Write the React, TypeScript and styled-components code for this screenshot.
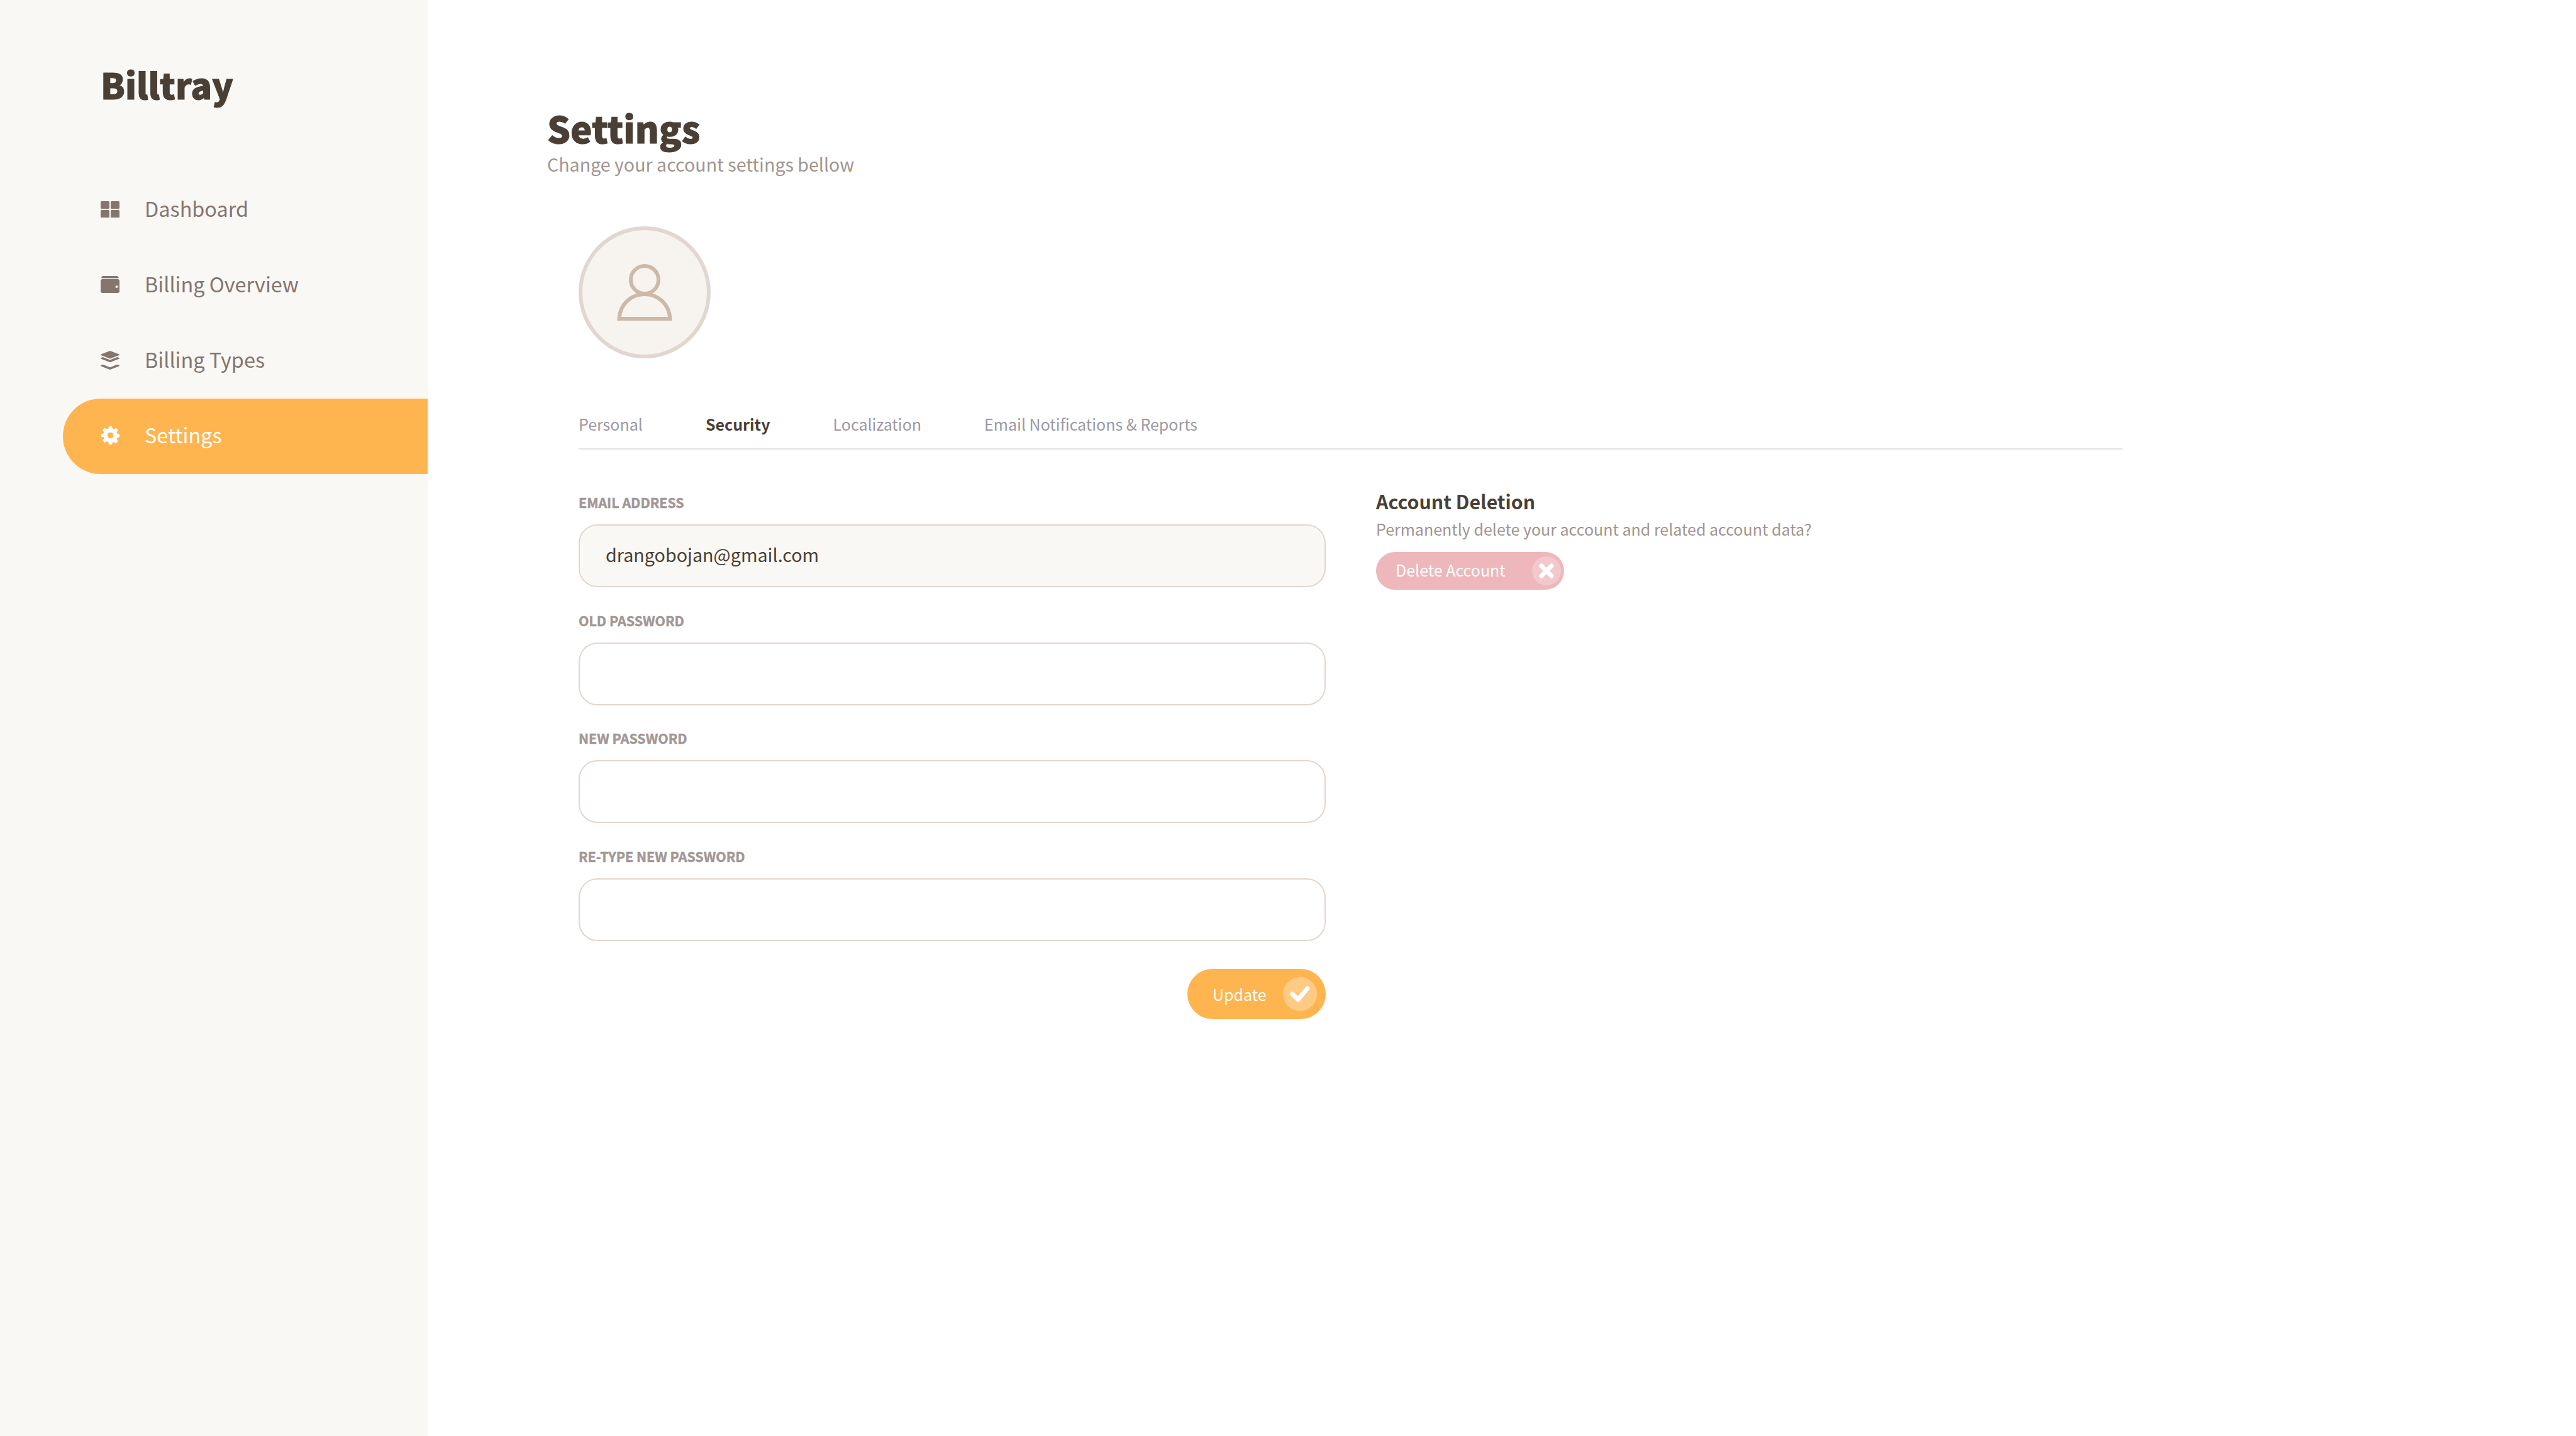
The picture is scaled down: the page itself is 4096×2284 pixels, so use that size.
import React from 'react';
import styled, {createGlobalStyle} from 'styled-components';

const GlobalStyle = createGlobalStyle`
    html, body {
      margin: 0;
      padding: 0;
      background: #FFFFFF;
    }

    * {
      box-sizing: border-box;
    }
`

const Page = styled.div`
    display: flex;
    width: 4096px;
    height: 2284px;
    font-family: "Noto Sans CJK SC", "Noto Sans", sans-serif;
    overflow: hidden;
`

const Sidebar = styled.aside`
    width: 680px;
    flex-shrink: 0;
    background: #F9F8F5;
    padding: 98px 0 0 100px;
`

const Logo = styled.div`
    padding-left: 60px;
    font-weight: 900;
    font-size: 56px;
    line-height: 72px;
    color: #4A3F35;
    -webkit-text-stroke: 1px #4A3F35;
`

const Nav = styled.nav`
    display: flex;
    flex-direction: column;
    margin-top: 104px;
`

const NavItem = styled.div<{$active?: boolean}>`
    display: flex;
    align-items: center;
    height: 120px;
    padding: 0 0 8px 60px;
    border-radius: 60px 0 0 60px;
    font-size: 32.4px;
    color: ${props => props.$active ? '#FFFFFF' : '#84756E'};
    background: ${props => props.$active ? '#FFB54F' : 'transparent'};
`

const NavIcon = styled.span`
    display: flex;
    align-items: center;
    justify-content: center;
    width: 30px;
    height: 36px;
    margin: 5px 40px 0 0;
`

const Main = styled.main`
    flex: 1;
    padding: 163px 0 0 190px;
`

const Title = styled.h1`
    margin: 0;
    font-weight: 900;
    font-size: 58px;
    line-height: 80px;
    color: #4A3F35;
    -webkit-text-stroke: 1px #4A3F35;
`

const Subtitle = styled.div`
    font-size: 28.6px;
    line-height: 40px;
    margin-top: -2px;
    color: #A2948F;
`

const Content = styled.div`
    width: 2455px;
    margin-left: 50px;
`

const Avatar = styled.div`
    display: flex;
    align-items: center;
    justify-content: center;
    width: 210px;
    height: 210px;
    margin-top: 79px;
    border: 6px solid #E2D6CF;
    border-radius: 50%;
    background: #F7F3EE;
`

const Tabs = styled.div`
    display: flex;
    gap: 100px;
    margin-top: 86px;
    padding-bottom: 21px;
    border-bottom: 2px solid #E2E2E2;
`

const Tab = styled.span<{$active?: boolean}>`
    font-size: 25px;
    line-height: 36px;
    font-weight: ${props => props.$active ? 700 : 400};
    color: ${props => props.$active ? '#4A3F35' : '#9C99A2'};
`

const Columns = styled.div`
    display: flex;
    gap: 80px;
    margin-top: 69px;
`

const Form = styled.div`
    display: flex;
    flex-direction: column;
    width: 1188px;
`

const Field = styled.div`
    display: flex;
    flex-direction: column;
    margin-bottom: 37.5px;
`

const FieldLabel = styled.label`
    font-weight: 700;
    font-size: 21.4px;
    line-height: 30px;
    margin-bottom: 20px;
    color: #A39795;
    -webkit-text-stroke: 0.5px #A39795;
`

const Input = styled.div<{$filled?: boolean}>`
    display: flex;
    align-items: center;
    height: 100px;
    padding: 0 41px 5px;
    border: 2px solid #E2D6CF;
    border-radius: 30px;
    font-size: 28.7px;
    color: #4A3F35;
    background: ${props => props.$filled ? '#F9F8F5' : '#FFFFFF'};
`

const Actions = styled.div`
    display: flex;
    justify-content: flex-end;
    margin-top: 7px;
`

const PillButton = styled.button<{$danger?: boolean}>`
    display: flex;
    align-items: center;
    justify-content: space-between;
    width: ${props => props.$danger ? '299px' : '220px'};
    height: ${props => props.$danger ? '60px' : '80px'};
    padding: ${props => props.$danger ? '0 5px 0 31px' : '0 14px 0 40px'};
    border: 0;
    border-radius: 40px;
    font-family: inherit;
    font-size: 25px;
    color: #FFFFFF;
    background: ${props => props.$danger ? '#EDB7BB' : '#FFB54F'};
`

const ButtonText = styled.span<{$danger?: boolean}>`
    margin-bottom: ${props => props.$danger ? '4px' : '0'};
`

const ButtonIcon = styled.span<{$danger?: boolean}>`
    display: flex;
    align-items: center;
    justify-content: center;
    width: ${props => props.$danger ? '46px' : '54px'};
    height: ${props => props.$danger ? '46px' : '54px'};
    border-radius: 50%;
    background: rgba(255, 255, 255, ${props => props.$danger ? 0.25 : 0.3});
`

const Aside = styled.div`
    display: flex;
    flex-direction: column;
`

const AsideTitle = styled.h2`
    margin: 0;
    font-weight: 700;
    font-size: 30.3px;
    line-height: 26px;
    color: #4A3F35;
`

const AsideText = styled.p`
    margin: 13px 0 19px;
    font-size: 25px;
    line-height: 36px;
    color: #A2948F;
`

const AsideAction = styled.div`
    display: flex;
`

const DashboardIcon = () => (
    <svg width="30" height="26" viewBox="0 0 30 26" fill="currentColor">
        <rect x="0" y="0" width="14" height="12" rx="1.5"/>
        <rect x="16" y="0" width="14" height="12" rx="1.5"/>
        <rect x="0" y="14" width="14" height="12" rx="1.5"/>
        <rect x="16" y="14" width="14" height="12" rx="1.5"/>
    </svg>
);

const WalletIcon = () => (
    <svg width="30" height="27" viewBox="0 0 30 27" fill="currentColor">
        <path fillRule="evenodd" d="M3 5h24a3 3 0 0 1 3 3v16a3 3 0 0 1-3 3H3a3 3 0 0 1-3-3V8a3 3 0 0 1 3-3zm22.500 10a2 2 0 1 0 0 4 2 2 0 0 0 0-4z"/>
        <path d="M3 3.500C1.500 3.500.8 2.800 1.200 2 1.700.8 2.500 0 4 0h22c1.500 0 2.300.9 2.700 2.400.1.600-.4 1.100-1.700 1.100z"/>
    </svg>
);

const LayersIcon = () => (
    <svg width="30" height="30" viewBox="0 0 30 30" fill="currentColor">
        <path d="M15 0l14.300 5.500c.9.400.9 1.200 0 1.600L15 12.600.7 7.100c-.9-.4-.9-1.200 0-1.600z"/>
        <path d="M3.600 10.100L15 14.500l11.400-4.400 2.900 1.100c.9.400.9 1.200 0 1.600L15 18.300.7 12.800c-.9-.4-.9-1.200 0-1.600z"/>
        <path d="M3.600 15.800L15 20.200l11.400-4.400 2.900 1.100c.9.400.9 1.200 0 1.600L15 24 .7 18.500c-.9-.4-.9-1.200 0-1.600z" transform="translate(0 6)"/>
    </svg>
);

const GearIcon = () => (
    <svg width="29" height="29" viewBox="0 0 24 24" fill="currentColor">
        <path fillRule="evenodd" d="M10 0h4l.7 3.200 1.900.8L19.400 2.200l2.800 2.800-1.800 2.800.8 1.900L24 10.400v3.900l-2.800.7-.8 1.900 1.800 2.800-2.800 2.800-2.800-1.800-1.900.8L14 24h-4l-.7-3.500-1.900-.8-2.800 1.800-2.800-2.800 1.800-2.800-.8-1.900L0 14.300v-3.900l2.800-.7.800-1.900L1.800 5l2.800-2.800L7.400 4l1.900-.8zM12 8a4 4 0 1 0 0 8 4 4 0 0 0 0-8z"/>
    </svg>
);

const PersonIcon = () => (
    <svg width="88" height="90" viewBox="0 0 88 90" fill="none" stroke="#CDB9A7" strokeWidth="6">
        <ellipse cx="44" cy="25" rx="22" ry="22"/>
        <path d="M3.500 87C5 63 23 48 44 48s39 15 40.500 39z"/>
    </svg>
);

const CheckIcon = () => (
    <svg width="32" height="26" viewBox="0 0 32 26" fill="none" stroke="#FFFFFF" strokeWidth="7" strokeLinecap="round" strokeLinejoin="round">
        <path d="M4 13l9 9L28 4"/>
    </svg>
);

const CrossIcon = () => (
    <svg width="24" height="24" viewBox="0 0 24 24" fill="none" stroke="#FFFFFF" strokeWidth="7" strokeLinecap="round">
        <path d="M4 4l16 16M20 4L4 20"/>
    </svg>
);

const navItems = [
    {label: 'Dashboard', icon: <DashboardIcon/>},
    {label: 'Billing Overview', icon: <WalletIcon/>},
    {label: 'Billing Types', icon: <LayersIcon/>},
    {label: 'Settings', icon: <GearIcon/>, active: true},
];

const tabs = ['Personal', 'Security', 'Localization', 'Email Notifications & Reports'];

const fields = [
    {label: 'EMAIL ADDRESS', value: 'drangobojan@gmail.com'},
    {label: 'OLD PASSWORD'},
    {label: 'NEW PASSWORD'},
    {label: 'RE-TYPE NEW PASSWORD'},
];

const App = () => {
    return (
        <Page>
            <GlobalStyle/>
            <Sidebar>
                <Logo>Billtray</Logo>
                <Nav>
                    {navItems.map(item => (
                        <NavItem key={item.label} $active={item.active}>
                            <NavIcon>{item.icon}</NavIcon>
                            {item.label}
                        </NavItem>
                    ))}
                </Nav>
            </Sidebar>
            <Main>
                <Title>Settings</Title>
                <Subtitle>Change your account settings bellow</Subtitle>
                <Content>
                    <Avatar><PersonIcon/></Avatar>
                    <Tabs>
                        {tabs.map(tab => (
                            <Tab key={tab} $active={tab === 'Security'}>{tab}</Tab>
                        ))}
                    </Tabs>
                    <Columns>
                        <Form>
                            {fields.map(field => (
                                <Field key={field.label}>
                                    <FieldLabel>{field.label}</FieldLabel>
                                    <Input $filled={!!field.value}>{field.value}</Input>
                                </Field>
                            ))}
                            <Actions>
                                <PillButton>
                                    <ButtonText>Update</ButtonText>
                                    <ButtonIcon><CheckIcon/></ButtonIcon>
                                </PillButton>
                            </Actions>
                        </Form>
                        <Aside>
                            <AsideTitle>Account Deletion</AsideTitle>
                            <AsideText>Permanently delete your account and related account data?</AsideText>
                            <AsideAction>
                                <PillButton $danger>
                                    <ButtonText $danger>Delete Account</ButtonText>
                                    <ButtonIcon $danger><CrossIcon/></ButtonIcon>
                                </PillButton>
                            </AsideAction>
                        </Aside>
                    </Columns>
                </Content>
            </Main>
        </Page>
    );
};

export default App;
